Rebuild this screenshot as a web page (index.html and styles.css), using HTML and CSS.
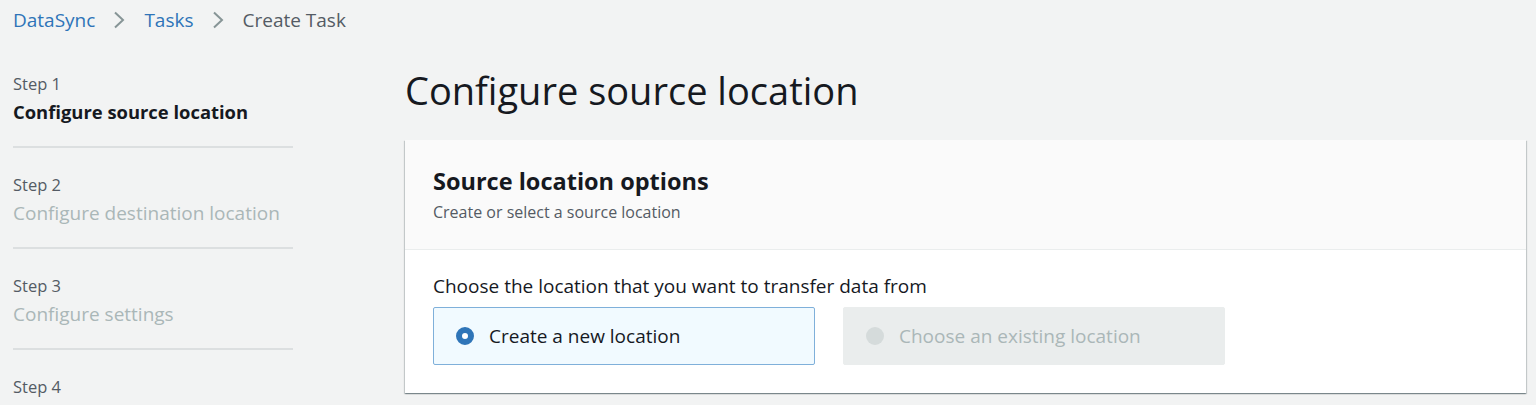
FILE: index.html
```html
<!DOCTYPE html>
<html lang="en">
<head>
<meta charset="utf-8">
<title>Create Task</title>
<link rel="stylesheet" href="styles.css">
</head>
<body>
<nav class="crumbs">
  <a class="crumb-link" href="#">DataSync</a>
  <svg class="chev" viewBox="0 0 12 18" width="12" height="18"><path d="M2 1.5 L10 9 L2 16.5" fill="none" stroke="#879596" stroke-width="2"/></svg>
  <a class="crumb-link" href="#">Tasks</a>
  <svg class="chev" viewBox="0 0 12 18" width="12" height="18"><path d="M2 1.5 L10 9 L2 16.5" fill="none" stroke="#879596" stroke-width="2"/></svg>
  <span class="crumb-current">Create Task</span>
</nav>
<div class="layout">
  <ol class="steps">
    <li class="step">
      <div class="step-num">Step 1</div>
      <div class="step-title active">Configure source location</div>
    </li>
    <li class="step">
      <div class="step-num">Step 2</div>
      <div class="step-title">Configure destination location</div>
    </li>
    <li class="step">
      <div class="step-num">Step 3</div>
      <div class="step-title">Configure settings</div>
    </li>
    <li class="step last">
      <div class="step-num">Step 4</div>
    </li>
  </ol>
  <main class="content">
    <h1 class="page-title">Configure source location</h1>
    <section class="panel">
      <header class="panel-head">
        <h2 class="panel-title">Source location options</h2>
        <p class="panel-desc">Create or select a source location</p>
      </header>
      <div class="panel-body">
        <div class="field-label">Choose the location that you want to transfer data from</div>
        <div class="tiles">
          <label class="tile selected">
            <span class="radio on"></span>
            <span class="tile-text">Create a new location</span>
          </label>
          <label class="tile disabled">
            <span class="radio off"></span>
            <span class="tile-text">Choose an existing location</span>
          </label>
        </div>
      </div>
    </section>
  </main>
</div>
</body>
</html>
```
FILE: styles.css
```css
* { box-sizing: border-box; }
html, body { margin: 0; padding: 0; }
body {
  background: #f2f3f3;
  font-family: "Open Sans", "Noto Sans", sans-serif;
  color: #16191f;
  height: 405px;
  overflow: hidden;
}
.crumbs {
  display: flex;
  align-items: center;
  height: 40px;
  padding-left: 13px;
  font-size: 19px;
}
.crumb-link { color: #2e74b8; text-decoration: none; }
.chev { margin: 0 19px 0 18px; }
.crumb-current { color: #545b64; }

.layout {
  display: grid;
  grid-template-columns: 280px 1fr;
  column-gap: 112px;
  padding-left: 13px;
  padding-right: 10px;
}
.steps { list-style: none; margin: 0; padding: 0; }
.step { border-bottom: 2px solid #dcdfe0; height: 101px; padding-top: 25px; }
.step:first-child { height: 108px; padding-top: 32px; }
.step.last { border-bottom: 0; }
.step-num { font-size: 16.5px; color: #545b64; line-height: 24px; }
.step-title { font-size: 19px; color: #aab7b8; line-height: 32px; }
.step-title.active { color: #16191f; font-weight: 700; font-size: 18.4px; }

.content { padding-top: 24px; }
.page-title {
  margin: 0;
  font-size: 38px;
  font-weight: 400;
  line-height: 52px;
  color: #16191f;
  height: 76px;
}
.panel {
  background: #fff;
  box-shadow: 0 1px 1px 0 rgba(0,28,36,0.3), 1px 1px 1px 0 rgba(0,28,36,0.15), -1px 1px 1px 0 rgba(0,28,36,0.15);
}
.panel-head {
  background: #fafafa;
  border-bottom: 1px solid #eaeded;
  height: 110px;
  padding: 25px 28px 0;
}
.panel-title { margin: 0; font-size: 23.5px; font-weight: 700; line-height: 32px; }
.panel-desc { margin: 4px 0 0; font-size: 16px; color: #545b64; line-height: 22px; }
.panel-body { padding: 24px 28px 28px; }
.field-label { font-size: 19px; line-height: 24px; margin-bottom: 9px; }
.tiles { display: flex; gap: 28px; }
.tile {
  width: 382px;
  height: 58px;
  display: flex;
  align-items: center;
  padding-left: 22px;
  border-radius: 2px;
  font-size: 19px;
}
.tile.selected { background: #f1faff; border: 1px solid #7fb0da; }
.tile.disabled { background: #eaeded; border: 1px solid #eaeded; color: #aab7b8; }
.radio {
  width: 18px;
  height: 18px;
  border-radius: 50%;
  margin-right: 15px;
  flex: none;
}
.radio.on { border: 6px solid #2f75b8; background: #fff; }
.radio.off { background: #d5dbdb; }
```
